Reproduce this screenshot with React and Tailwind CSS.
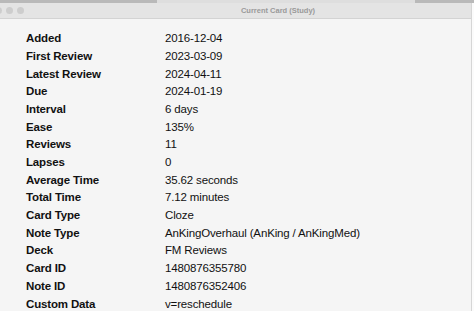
import React from "react";

const rows = [
  ["Added", "2016-12-04"],
  ["First Review", "2023-03-09"],
  ["Latest Review", "2024-04-11"],
  ["Due", "2024-01-19"],
  ["Interval", "6 days"],
  ["Ease", "135%"],
  ["Reviews", "11"],
  ["Lapses", "0"],
  ["Average Time", "35.62 seconds"],
  ["Total Time", "7.12 minutes"],
  ["Card Type", "Cloze"],
  ["Note Type", "AnKingOverhaul (AnKing / AnKingMed)"],
  ["Deck", "FM Reviews"],
  ["Card ID", "1480876355780"],
  ["Note ID", "1480876352406"],
  ["Custom Data", "v=reschedule"],
];

export default function App() {
  return (
    <div
      className="w-[474px] h-[311px] overflow-hidden bg-[#f7f7f7] flex flex-col"
      style={{ fontFamily: "'Liberation Sans', Arial, sans-serif" }}
    >
      <div className="flex h-[3px] shrink-0">
        <div className="w-[157px] bg-[#b9b9b9]" />
        <div className="w-[258px] bg-[#dedede]" />
        <div className="flex-1 bg-[#b9b9b9]" />
      </div>
      <div className="flex flex-1 min-h-0">
        <div className="w-[472px] flex flex-col border-r border-[#d6d6d6] border-b">
          <div className="relative h-[16px] shrink-0 bg-[#e4e4e4] border-b border-[#d3d3d3] flex items-center">
            <div className="flex items-center gap-[4px] -ml-[5px]">
              <div className="w-[7px] h-[7px] rounded-full bg-[#cdcdcd]" />
              <div className="w-[7px] h-[7px] rounded-full bg-[#cdcdcd]" />
              <div className="w-[7px] h-[7px] rounded-full bg-[#cdcdcd]" />
            </div>
            <div className="absolute left-[178px] w-[200px] text-center text-[7.5px] font-bold text-[#9a9a9a]">
              Current Card (Study)
            </div>
          </div>
          <div className="flex-1 bg-[#f5f5f5] pt-[11px] pl-[26px]">
            {rows.map(([k, v]) => (
              <div key={k} className="flex h-[17.7px] items-center text-[11.5px] tracking-[-0.15px] text-[#111]">
                <div className="w-[139px] font-bold">{k}</div>
                <div>{v}</div>
              </div>
            ))}
          </div>
        </div>
        <div className="flex-1 bg-[#fbfbfb]" />
      </div>
    </div>
  );
}
